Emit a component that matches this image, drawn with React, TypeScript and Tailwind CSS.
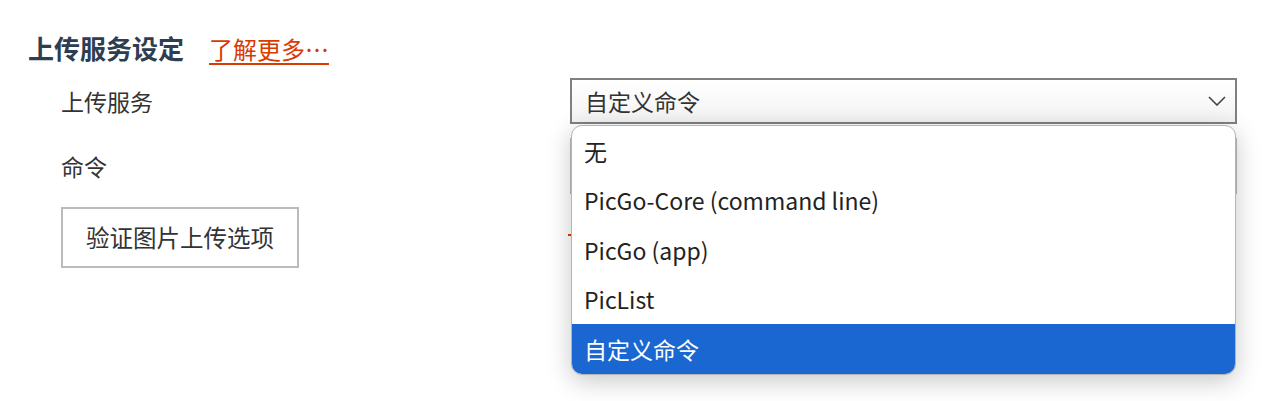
const options = ["无", "PicGo-Core (command line)", "PicGo (app)", "PicList", "自定义命令"];

export default function App() {
  return (
    <div
      className="relative h-[401px] w-[1282px] bg-white text-[#333] px-[28px] pt-[30px]"
      style={{ fontFamily: '"Noto Sans CJK SC", "Noto Sans", sans-serif' }}
    >
      <div className="flex items-baseline gap-[25px] h-[36px]">
        <h2 className="text-[26px] leading-[36px] font-bold text-[#2c3e50]">上传服务设定</h2>
        <a
          href="#"
          className="text-[24px] leading-[36px] text-[#d83b01] underline decoration-2 underline-offset-[4px]"
        >
          了解更多…
        </a>
      </div>

      <div className="pl-[33px] pt-[12px]">
        <div className="flex items-center h-[46px]">
          <div className="w-[509px] text-[23px]">上传服务</div>
          <div className="relative w-[667px]">
            <div className="flex items-center justify-between h-[46px] border-2 border-[#808080] bg-gradient-to-b from-white to-[#f3f3f3] pl-[13px] pr-[9px] text-[23px]">
              <span>自定义命令</span>
              <svg width="18" height="10" viewBox="0 0 18 10" fill="none">
                <path d="M1 1 L9 9 L17 1" stroke="#444" strokeWidth="1.6" />
              </svg>
            </div>
          </div>
        </div>

        <div className="flex items-center h-[56px] mt-[14px]">
          <div className="w-[509px] text-[23px]">命令</div>
          <div className="w-[667px] h-[56px] border-2 border-[#bbb] bg-white"></div>
        </div>

        <div className="flex items-start mt-[13px]">
          <button className="w-[238px] h-[61px] border-2 border-[#bbb] bg-white text-[23.5px] text-[#333]">
            验证图片上传选项
          </button>
          <div className="ml-[269px] mt-[27px] w-[6px] h-[2px] bg-[#d83b01]"></div>
        </div>
      </div>

      <ul className="absolute left-[571px] top-[125px] w-[665px] overflow-hidden rounded-[11px] border border-[#b5b5b5] bg-white shadow-[0_6px_24px_rgba(0,0,0,0.22)]">
        {options.map((o, i) => (
          <li
            key={i}
            className={
              "flex items-center h-[49.6px] pl-[12px] text-[23px] " +
              (i === options.length - 1 ? "bg-[#1a67d2] text-white" : "text-[#222]")
            }
          >
            {o}
          </li>
        ))}
      </ul>
    </div>
  );
}
